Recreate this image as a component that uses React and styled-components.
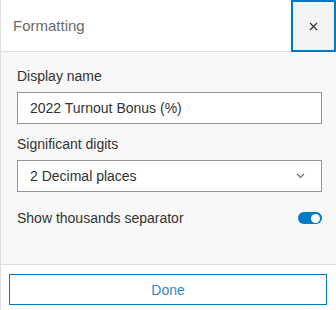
import React from "react";
import styled, { createGlobalStyle } from "styled-components";

const Global = createGlobalStyle`
  html, body { margin: 0; padding: 0; background: #fff; }
  body { font-family: "Liberation Sans", Arial, sans-serif; }
  * { box-sizing: border-box; }
`;

const Panel = styled.div`
  width: 336px;
  height: 310px;
  display: flex;
  flex-direction: column;
  border-left: 1px solid #dfdfdf;
  background: #f8f8f8;
  color: #323232;
`;

const Header = styled.div`
  height: 52px;
  display: flex;
  align-items: stretch;
  background: #fff;
  border-bottom: 1px solid #dfdfdf;
`;

const Title = styled.div`
  flex: 1;
  display: flex;
  align-items: center;
  padding-left: 12px;
  font-size: 15px;
  color: #6a6a6a;
`;

const CloseButton = styled.button`
  width: 45px;
  margin-bottom: -1px;
  border: 2px solid #007ac2;
  background: #f3f3f3;
  display: flex;
  align-items: center;
  justify-content: center;
  padding: 0;
  cursor: pointer;
`;

const Content = styled.div`
  flex: 1;
  padding: 14px 14px 0 16px;
`;

const Field = styled.div`
  margin-bottom: 10px;
`;

const Label = styled.div`
  font-size: 14px;
  line-height: 20px;
  margin-bottom: 6px;
`;

const Box = styled.div`
  height: 32px;
  border: 1px solid #949494;
  background: #fff;
  display: flex;
  align-items: center;
  justify-content: space-between;
  padding: 0 16px 0 12px;
  font-size: 14px;
  color: #323232;
`;

const ToggleRow = styled.div`
  display: flex;
  align-items: center;
  justify-content: space-between;
  font-size: 14px;
  line-height: 20px;
  margin-top: 16px;
`;

const Track = styled.div`
  width: 24px;
  height: 12px;
  border-radius: 6px;
  background: ${({ on }) => (on ? "#007ac2" : "#d4d4d4")};
  display: flex;
  align-items: center;
  justify-content: ${({ on }) => (on ? "flex-end" : "flex-start")};
  padding: 0 2px;
`;

const Knob = styled.div`
  width: 9px;
  height: 9px;
  border-radius: 50%;
  background: #fff;
`;

const Footer = styled.div`
  height: 46px;
  background: #fff;
  border-top: 1px solid #dfdfdf;
  padding: 9px 9px 5px 8px;
`;

const DoneButton = styled.button`
  width: 100%;
  height: 31px;
  border: 1px solid #007ac2;
  background: #fff;
  color: #2b8bcb;
  font-family: "Liberation Sans", Arial, sans-serif;
  font-size: 14px;
  cursor: pointer;
`;

export default function App() {
  return (
    <>
      <Global />
      <Panel>
        <Header>
          <Title>Formatting</Title>
          <CloseButton aria-label="Close">
            <svg width="9" height="9" viewBox="0 0 9 9">
              <path d="M1 1L8 8M8 1L1 8" stroke="#323232" strokeWidth="1.2" fill="none" />
            </svg>
          </CloseButton>
        </Header>
        <Content>
          <Field>
            <Label>Display name</Label>
            <Box>2022 Turnout Bonus (%)</Box>
          </Field>
          <Field>
            <Label>Significant digits</Label>
            <Box>
              <span>2 Decimal places</span>
              <svg width="9" height="6" viewBox="0 0 9 6">
                <path d="M1 1L4.5 4.5L8 1" stroke="#6a6a6a" strokeWidth="1.1" fill="none" />
              </svg>
            </Box>
          </Field>
          <ToggleRow>
            <span>Show thousands separator</span>
            <Track on>
              <Knob />
            </Track>
          </ToggleRow>
        </Content>
        <Footer>
          <DoneButton>Done</DoneButton>
        </Footer>
      </Panel>
    </>
  );
}
